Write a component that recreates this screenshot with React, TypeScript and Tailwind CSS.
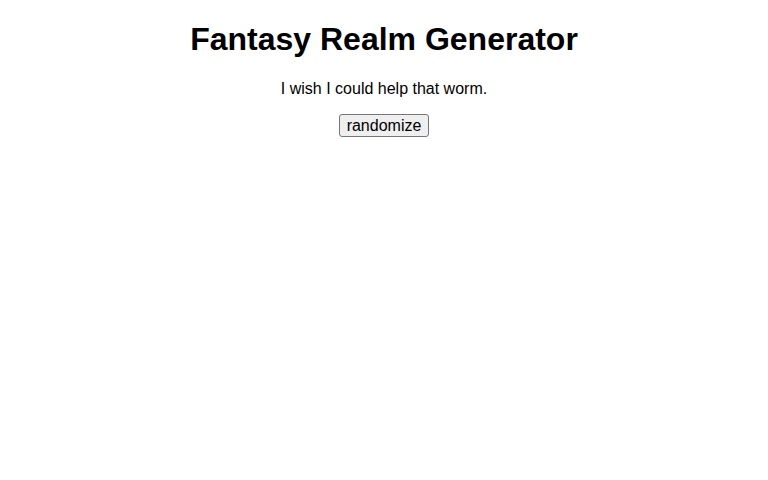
import React, { useState } from "react";

const phrases = [
  "I wish I could help that worm.",
  "The mountains hum at dusk.",
  "A dragon naps beneath the bridge.",
  "Rivers here run uphill on Tuesdays.",
];

const App = () => {
  const [idx, setIdx] = useState(0);

  return (
    <div className="text-center text-black bg-white" style={{ fontFamily: '"Liberation Sans", Arial, sans-serif' }}>
      <h1 className="pt-[21px] mb-[22px] text-[32px] font-bold leading-[37px]">Fantasy Realm Generator</h1>
      <p className="mb-4 text-base leading-[18px]">{phrases[idx]}</p>
      <button
        className="px-[7px] py-[1px] text-base leading-[19px] bg-[#efefef] border border-[#767676] rounded-[3px] hover:bg-[#e5e5e5]"
        onClick={() => setIdx((idx + 1) % phrases.length)}
      >
        randomize
      </button>
    </div>
  );
};

export default App;
